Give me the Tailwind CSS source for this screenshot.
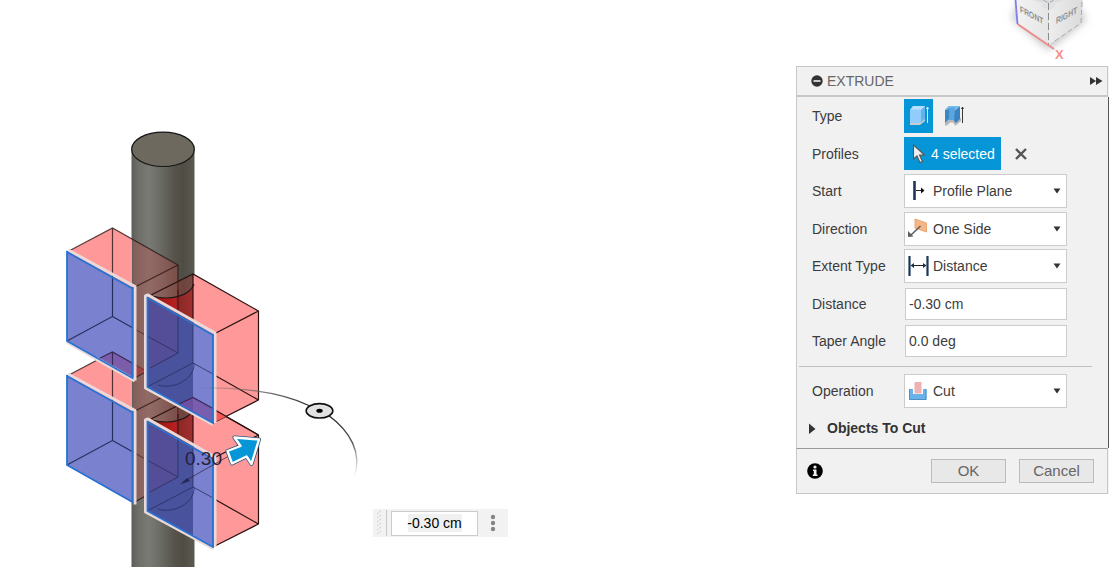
<!DOCTYPE html>
<html lang="en">
<head>
<meta charset="utf-8">
<title>Extrude</title>
<script src="https://cdn.jsdelivr.net/npm/@tailwindcss/browser@4"></script>
</head>
<body class="bg-white font-['Liberation_Sans',Arial,sans-serif] text-sm text-[#3c3c3c]">
<main class="relative flex min-h-screen items-start justify-end overflow-hidden pt-[66px] pr-[1px]">

  <!-- Model canvas -->
  <svg class="absolute top-0 left-0" width="400" height="567" viewBox="0 0 400 567" role="img" aria-label="Model with four extruded cuts">
    <defs>
      <linearGradient id="metal">
        <stop offset="0" stop-color="#5c5d57"/><stop offset=".1" stop-color="#6c6e67"/><stop offset=".28" stop-color="#787a73"/>
        <stop offset=".45" stop-color="#6b6c65"/><stop offset=".68" stop-color="#56534b"/><stop offset=".82" stop-color="#4f4c43"/><stop offset="1" stop-color="#5a5a53"/>
      </linearGradient>
      <linearGradient id="inner">
        <stop offset="0" stop-color="#65140f"/><stop offset=".3" stop-color="#a81a18"/><stop offset=".58" stop-color="#b82020"/><stop offset=".62" stop-color="#8c2624"/><stop offset="1" stop-color="#a03030"/>
      </linearGradient>
      <linearGradient id="arc1" gradientUnits="userSpaceOnUse" x1="195" y1="388" x2="305" y2="400">
        <stop offset="0" stop-color="#555" stop-opacity="0"/><stop offset=".5" stop-color="#666" stop-opacity=".7"/><stop offset="1" stop-color="#333"/>
      </linearGradient>
      <linearGradient id="arc2" gradientUnits="userSpaceOnUse" x1="330" y1="415" x2="354" y2="478">
        <stop offset="0" stop-color="#222"/><stop offset=".5" stop-color="#555"/><stop offset="1" stop-color="#999" stop-opacity="0"/>
      </linearGradient>
      <clipPath id="onRod"><rect x="132" y="130" width="62" height="437"/></clipPath>
      <clipPath id="offRod"><path d="M0 0H132V567H0ZM193 0H400V567H193Z"/></clipPath>
      <g id="leftBox">
        <path d="M67 252L112.500 228L178 265V353L133 379L67 341Z" fill="#f99" clip-path="url(#offRod)"/>
        <path d="M112.500 228L178 265V353L133 379V240Z" fill="#c2504e" fill-opacity=".36" clip-path="url(#onRod)"/>
        <path d="M67 252L112.500 228L178 265V353.500L133 379M133 288L178 265M112.500 228V277" fill="none" stroke="#2a1515" stroke-opacity=".8" stroke-width="1.200"/>
        <path d="M112.500 316.500L178 353.500" stroke="#352020" stroke-opacity=".7"/>
      </g>
      <g id="leftFace">
        <path d="M67 252L133 288V379L67 341Z" fill="#7a82d0"/>
        <path d="M112.500 277V316.500L67 341M112.500 316.500L133 328" fill="none" stroke="#23305f" stroke-width="1.200"/>
      </g>
      <g id="leftEdge">
        <path d="M68 250L135 286.500V380.500" fill="none" stroke="#ead9d8" stroke-width="3" stroke-linejoin="round"/>
        <path d="M67 252L132.500 288.500V378L67 341Z" fill="none" stroke="#2872d2" stroke-width="1.800"/>
      </g>
      <g id="rightBox">
        <path d="M193 274L258.500 311V400L213 423L193 412Z" fill="#f99"/>
        <path d="M178 282L193 274V290L178 296Z" fill="#b33" fill-opacity=".3"/>
        <path d="M152 296C170 301 190 296 193 284V324Z" fill="url(#inner)"/>
        <path d="M152 296C170 301 190 296 194 284" fill="none" stroke="#221817" stroke-width="1.200"/>
        <path d="M151 295L193 274L258.500 311V400L213 423M213 334.500L258.500 311M193 363L258.500 400M193 274V324" fill="none" stroke="#2b1212" stroke-width="1.200"/>
        <path d="M178 290V315" stroke="#451010"/>
      </g>
      <g id="rightFace">
        <path d="M147 297L213 334.500V423L147 387Z" fill="#7a82d0"/>
        <path d="M147 297L193 323V412L147 387Z" fill="#49529c"/>
        <path d="M147 297L178 314.500V354L147 371Z" fill="#544d97"/>
        <path d="M193 323V363L147 387M193 363L213 374M178 314V353L150 368M147 336L178 353M158 385C172 390 195 380 194 363" fill="none" stroke="#25305f" stroke-opacity=".8"/>
      </g>
      <g id="rightEdge">
        <path d="M213 424.500L145.500 388V296L148 295L215 333V423" fill="none" stroke="#ead9d8" stroke-width="3" stroke-linejoin="round"/>
        <path d="M147.500 298L213 335V423L147.500 387Z" fill="none" stroke="#2872d2" stroke-width="1.800"/>
      </g>
    </defs>

    <path d="M131.500 149V567H194.500V149Z" fill="url(#metal)"/>
    <ellipse cx="163" cy="149.300" rx="31.300" ry="17.200" fill="#6e695e" stroke="#151515" stroke-width="1.200"/>

    <!-- Left pair of cuts -->
    <use href="#leftBox" y="124"/>
    <use href="#leftFace" y="124"/>
    <use href="#leftEdge" y="124"/>
    <use href="#leftBox"/>
    <use href="#leftFace"/>
    <path d="M98 359L112.500 352L133 363.500V379Z" fill="#7b5dac"/>
    <path d="M98 359L112.500 352L133 363.500M112.500 352V367" fill="none" stroke="#382958" stroke-width="1.200"/>
    <path d="M135 365L145 370.500L135 377Z" fill="#a03a3a" fill-opacity=".7"/>
    <path d="M135 380.500L96 358.500" stroke="#ead9d8" stroke-width="4"/>
    <path d="M66.500 342.500L96 359.500" stroke="#ead9d8" stroke-width="2"/>
    <use href="#leftEdge"/>

    <!-- Right pair of cuts -->
    <use href="#rightBox" y="124"/>
    <use href="#rightFace" y="124"/>
    <use href="#rightEdge" y="124"/>
    <use href="#rightBox"/>
    <use href="#rightFace"/>
    <path d="M177 404L193 397.500L213 408.500V423Z" fill="#7950a4" fill-opacity=".75"/>
    <path d="M179 404L193 397.500L213 408.500" fill="none" stroke="#382958" stroke-width="1.200"/>
    <path d="M215 410L226 416.500L215 422Z" fill="#fa5656"/>
    <path d="M216 410.500L258.500 435" stroke="#2b1212" stroke-width="1.200"/>
    <use href="#rightEdge"/>

    <!-- Dimension and drag handle -->
    <text x="185" y="465" font-size="19" fill="#29203c">0.30</text>
    <path d="M257 440L183 482" stroke="#2b1828" stroke-opacity=".65"/>
    <path d="M180 484.500L187 478L190 481Z" fill="#242a56"/>
    <path d="M227.500 451L240.500 446L234.500 437.500L259 439.500L251.500 464L246.500 456.500L232 463.500Z" fill="#0696d7" stroke="#31577c" stroke-width="4" stroke-linejoin="round"/>
    <path d="M227.500 451L240.500 446L234.500 437.500L259 439.500L251.500 464L246.500 456.500L232 463.500Z" fill="#0696d7" stroke="#fff" stroke-width="2.400" stroke-linejoin="round"/>

    <!-- Taper arc and grip -->
    <path d="M195 388C240 387 279 391 310 406" fill="none" stroke="url(#arc1)" stroke-width="1.300"/>
    <path d="M328 415C350 431 363 453 354 478" fill="none" stroke="url(#arc2)" stroke-width="1.400"/>
    <ellipse cx="319.500" cy="410.800" rx="13.300" ry="7.200" fill="#e2e2e2" stroke="#111" stroke-width="1.700"/>
    <ellipse cx="319.500" cy="410.800" rx="3.200" ry="2" fill="#000"/>
  </svg>

  <!-- Floating distance box -->
  <div class="absolute top-[509px] left-[373px] flex h-7 w-[135px] items-center bg-[#f2f2f2]">
    <svg class="ml-1 shrink-0" width="6" height="26" aria-hidden="true"><path d="M0 4L4 1M0 8L4 5M0 12L4 9M0 16L4 13M0 20L4 17M0 24L4 21" stroke="#ccc" stroke-dasharray="2 1"/></svg>
    <span class="ml-[3px] h-[26px] w-px bg-[#c8c8c8]"></span>
    <input aria-label="Distance value" value="-0.30 cm" class="ml-1 h-[25px] w-[87px] border border-[#ccc] bg-white bg-[linear-gradient(#f0f0f0,#f0f0f0)] bg-[length:54px_18px] bg-center bg-no-repeat text-center text-black">
    <button aria-label="More options" class="flex h-full flex-1 items-center justify-center"><svg width="6" height="18" fill="#858585"><circle cx="3" cy="3" r="2.200"/><circle cx="3" cy="9" r="2.200"/><circle cx="3" cy="15" r="2.200"/></svg></button>
  </div>

  <!-- View cube -->
  <svg class="absolute top-0 right-0" width="120" height="66" viewBox="990 0 120 66" role="img" aria-label="View cube">
    <defs>
      <filter id="soft" x="-30%" y="-30%" width="160%" height="160%"><feGaussianBlur stdDeviation="4"/></filter>
      <linearGradient id="cubeL"><stop offset="0" stop-color="#f3f3f3"/><stop offset="1" stop-color="#e5e5e5"/></linearGradient>
      <linearGradient id="cubeR"><stop offset="0" stop-color="#ededed"/><stop offset="1" stop-color="#dadada"/></linearGradient>
    </defs>
    <path d="M1012 18L1048 50L1086 20L1074 0H1020Z" fill="#999" fill-opacity=".6" filter="url(#soft)"/>
    <path d="M1015 -4L1048.500 4V45L1018 24Z" fill="url(#cubeL)"/>
    <path d="M1083 -4L1048.500 4V45L1081 23Z" fill="url(#cubeR)"/>
    <path d="M1042 0L1048.500 3L1055 0V7L1048.500 10L1042 7Z" fill="#dfe3e6"/>
    <path d="M1048.500 3V45" stroke="#8b8b8b" stroke-dasharray="7 3"/>
    <path d="M1082 2L1081 23L1052 43M1043 0L1048.500 3L1054 0" fill="none" stroke="#aaa" stroke-dasharray="5 3"/>
    <path d="M1015.500 0L1017.500 24" stroke="#7f7ff0" stroke-width="1.800"/>
    <path d="M1017.500 24L1054 49" stroke="#ec8c8c" stroke-width="2"/>
    <g font-size="9" font-weight="bold" fill="#8e9194">
      <text transform="matrix(.76 .4 .04 1 1020 12)">FRONT</text>
      <text transform="matrix(.76 -.4 0 1 1056 24)">RIGHT</text>
    </g>
    <text x="1055" y="59" font-size="13" font-weight="bold" fill="#fa8f8f">X</text>
  </svg>

  <!-- Extrude dialog -->
  <form class="relative w-[313px] bg-[#f1f1f1]" onsubmit="return false">
    <header class="mr-px flex h-[31px] items-center border border-b-2 border-[#c8c8c8] pr-1 pl-3.5 text-[#666]">
      <button aria-label="Collapse" class="mr-1"><svg width="12" height="12"><circle cx="6" cy="6" r="5.700" fill="#333"/><path d="M2.500 6H9.500" stroke="#ddd" stroke-width="1.800"/></svg></button>
      <h1>EXTRUDE</h1>
      <button aria-label="Dock" class="ml-auto"><svg width="14" height="10" fill="#333"><path d="M1 1L7 5L1 9ZM7 1L13.500 5L7 9Z"/></svg></button>
    </header>

    <div class="border-r border-l border-r-[#555] border-l-[#c8c8c8] pt-0.5 pb-2">
      <div class="grid h-[259px] grid-cols-[92px_163px] content-between items-center pl-[15px]">
        <span>Type</span>
        <div class="flex h-[34px] items-center">
          <button aria-label="Extrude" class="flex h-[34px] w-[29px] items-center justify-center bg-[#0696d7]">
            <svg width="20" height="22" viewBox="0 0 20 22"><path d="M1 17V20H11L16 16V13Z" fill="#ccc"/><path d="M1 5L4 1H16V14L11 18H1Z" fill="#62b2ec"/><path d="M1 5L4 1H16L12 5Z" fill="#b5e0ff"/><rect x="1" y="4.500" width="11" height="13.500" rx="1.500" fill="#90cdfb"/><path d="M18.500 18V3M17.500 4L18.500 2L19.500 4" fill="none" stroke="#fff" stroke-width=".9"/></svg>
          </button>
          <button aria-label="Thin extrude" class="ml-1.5 flex h-[34px] w-[29px] items-center justify-center">
            <svg width="20" height="22" viewBox="0 0 20 22"><path d="M1 16V20.500H3L6 17.500H9L11 20.500H12L17 16V13H3Z" fill="#b8b8b8"/><path d="M1 5L5 1V14L1 18Z" fill="#3987c5"/><path d="M5 2H14V15H5Z" fill="#5ba5de"/><path d="M11 5L16 1V14L12 18L10 16Z" fill="#3a83c0"/><path d="M1 5L5 1H16L12 5H10L12 2.500H6L3 5Z" fill="#79bdec"/><path d="M18.500 18V3M17.500 4L18.500 2L19.500 4" fill="none" stroke="#222" stroke-width=".9"/></svg>
          </button>
        </div>

        <span>Profiles</span>
        <div class="flex h-[34px] items-center">
          <button class="flex h-[33px] w-[97px] items-center bg-[#0696d7] pl-2 text-white">
            <svg class="mr-1.5" width="13" height="20" viewBox="0 0 13 20"><path d="M1.500 1V15L5 12L8 18.500L10.500 17.500L7.500 11H12.500Z" fill="#eee" stroke="#555" stroke-width="1.100"/></svg>4 selected
          </button>
          <button aria-label="Clear selection" class="ml-3.5"><svg width="12" height="12"><path d="M1 1L11 11M11 1L1 11" stroke="#555" stroke-width="2.400"/></svg></button>
        </div>

        <label for="start">Start</label>
        <div class="relative">
          <select id="start" class="h-[34px] w-full appearance-none border border-[#ccc] bg-white pl-7"><option>Profile Plane</option></select>
          <svg class="pointer-events-none absolute top-1.5 left-1" width="20" height="22"><path d="M6.500 1V20" stroke="#1c3659" stroke-width="2.600"/><path d="M8 10.500H14" stroke="#222"/><path d="M13 7.500L16.500 10.500L13 13.500Z" fill="#111"/></svg>
          <svg class="pointer-events-none absolute top-3.5 right-1.5" width="8" height="6" fill="#333"><path d="M0.500 0.500H7.500L4 5.500Z"/></svg>
        </div>

        <label for="direction">Direction</label>
        <div class="relative">
          <select id="direction" class="h-[34px] w-full appearance-none border border-[#ccc] bg-white pl-7"><option>One Side</option></select>
          <svg class="pointer-events-none absolute top-1.5 left-1" width="20" height="22"><path d="M7 1L18.500 5V14L7 10Z" fill="#f5b68a" stroke="#e9a573"/><path d="M12.500 8L3 17" stroke="#606060" stroke-width="1.600"/><path d="M0 19V13L5.500 18.500Z" fill="#606060"/></svg>
          <svg class="pointer-events-none absolute top-3.5 right-1.5" width="8" height="6" fill="#333"><path d="M0.500 0.500H7.500L4 5.500Z"/></svg>
        </div>

        <label for="extent">Extent Type</label>
        <div class="relative">
          <select id="extent" class="h-[34px] w-full appearance-none border border-[#ccc] bg-white pl-7"><option>Distance</option></select>
          <svg class="pointer-events-none absolute top-1.5 left-1" width="21" height="22"><path d="M1.500 1V21M19.500 1V21" stroke="#1c3659" stroke-width="2.200"/><path d="M4 10.500H17" stroke="#222"/><path d="M2.500 10.500L6 8V13ZM18.500 10.500L15 8V13Z" fill="#1c2f45"/></svg>
          <svg class="pointer-events-none absolute top-3.5 right-1.5" width="8" height="6" fill="#333"><path d="M0.500 0.500H7.500L4 5.500Z"/></svg>
        </div>

        <label for="distance">Distance</label>
        <input id="distance" value="-0.30 cm" class="my-px ml-px h-8 border border-[#ccc] bg-white px-[3px]">

        <label for="taper">Taper Angle</label>
        <input id="taper" value="0.0 deg" class="my-px ml-px h-8 border border-[#ccc] bg-white px-[3px]">
      </div>

      <hr class="mt-2 mr-4 mb-[7px] ml-0.5 border-[#c0c0c0]">

      <div class="grid grid-cols-[92px_163px] items-center pl-[15px]">
        <label for="operation">Operation</label>
        <div class="relative">
          <select id="operation" class="h-[34px] w-full appearance-none border border-[#ccc] bg-white pl-7"><option>Cut</option></select>
          <svg class="pointer-events-none absolute top-1.5 left-1" width="20" height="22"><path d="M1 9H5V14H15V9H18.500V20H1Z" fill="#69b3ea"/><path d="M1.500 9V19.500H18V9" fill="none" stroke="#4b8fc5"/><rect x="6.500" y="2" width="7" height="11.500" fill="#efb2b2"/></svg>
          <svg class="pointer-events-none absolute top-3.5 right-1.5" width="8" height="6" fill="#333"><path d="M0.500 0.500H7.500L4 5.500Z"/></svg>
        </div>
      </div>

      <button class="mt-2 ml-3 flex h-6 items-center font-bold text-[#333]"><svg class="mr-[11px]" width="7" height="12" fill="#333"><path d="M0 1.500L6.500 7L0 12Z"/></svg>Objects To Cut</button>
    </div>

    <footer class="mr-px flex h-[46px] items-center border border-[#c8c8c8] border-t-[#999] pr-[13px] pl-2.5">
      <button aria-label="Information" class="mr-auto"><svg width="16" height="16"><circle cx="8" cy="8" r="7.800" fill="#000"/><circle cx="8" cy="4" r="1.600" fill="#f1f1f1"/><path d="M6 6.500H9.500V11.500H10.500V13H5.800V11.500H6.800V8H6Z" fill="#f1f1f1"/></svg></button>
      <button class="h-6 w-[75px] border border-[#bbb] bg-[#e8e8e8] text-[15px] text-[#666]">OK</button>
      <button class="ml-[13px] h-6 w-[75px] border border-[#bbb] bg-[#e8e8e8] text-[15px] text-[#666]">Cancel</button>
    </footer>
  </form>
</main>
</body>
</html>
